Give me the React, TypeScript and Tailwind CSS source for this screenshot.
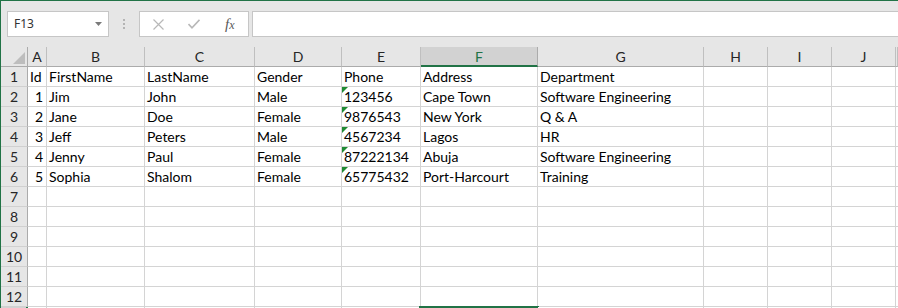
import React from "react";

const GRID =
  "grid grid-cols-[27px_19px_98px_110px_87px_79px_117px_166px_64px_64px_64px_1fr]";

const letters = ["A", "B", "C", "D", "E", "F", "G", "H", "I", "J", ""];

const data: string[][] = [
  ["Id", "FirstName", "LastName", "Gender", "Phone", "Address", "Department"],
  ["1", "Jim", "John", "Male", "123456", "Cape Town", "Software Engineering"],
  ["2", "Jane", "Doe", "Female", "9876543", "New York", "Q & A"],
  ["3", "Jeff", "Peters", "Male", "4567234", "Lagos", "HR"],
  ["4", "Jenny", "Paul", "Female", "87222134", "Abuja", "Software Engineering"],
  ["5", "Sophia", "Shalom", "Female", "65775432", "Port-Harcourt", "Training"],
];

function ErrorMark() {
  return (
    <svg
      className="absolute left-0 top-0"
      width="6"
      height="6"
      viewBox="0 0 6 6"
    >
      <polygon points="0,0 6,0 0,6" fill="#1f8a33" />
    </svg>
  );
}

function Row({ n }: { n: number }) {
  const row = data[n - 1];
  const selectedRow = n === 13;
  return (
    <div className={`${GRID} h-[20px]`}>
      <div
        className={
          selectedRow
            ? "h-[20px] bg-[#d2d2d2] border-r-2 border-b border-r-[#217346] border-b-[#d0d0d0]"
            : "h-[20px] bg-[#e6e6e6] border-r border-b border-r-[#ababab] border-b-[#d0d0d0] text-center leading-[19px] text-[#262626]"
        }
      >
        {selectedRow ? null : n}
      </div>
      {letters.map((l, ci) => {
        const val = row ? row[ci] : undefined;
        const isNum = n > 1 && ci === 0;
        const isPhone = n > 1 && ci === 4 && row;
        return (
          <div
            key={l + ci}
            className={`relative h-[20px] bg-white border-b border-r border-[#d4d4d4] pl-[2px] pr-[3px] leading-[19px] whitespace-nowrap text-black ${
              isNum ? "text-right" : "text-left"
            }`}
          >
            {isPhone ? <ErrorMark /> : null}
            {val ?? ""}
            {selectedRow && ci === 5 ? (
              <div className="absolute left-[-2px] top-[-1px] w-[120px] h-[22px] border-2 border-[#217346]" />
            ) : null}
          </div>
        );
      })}
    </div>
  );
}

export default function App() {
  const rows = Array.from({ length: 13 }, (_, i) => i + 1);
  return (
    <div className="w-[898px] h-[308px] overflow-hidden bg-[#e6e6e6] border-t border-l border-[#217346] font-['Lato',sans-serif] text-[14px]">
      {/* Formula bar */}
      <div className="flex items-start h-[46px] pt-[10px]">
        <div className="ml-[6px] w-[102px] h-[26px] bg-white border border-[#c6c6c6] flex items-center justify-between pl-[6px] pr-[6px]">
          <span className="font-['Noto_Sans',sans-serif] text-[12px] text-[#333]">
            F13
          </span>
          <svg width="7" height="4" viewBox="0 0 7 4">
            <polygon points="0,0 7,0 3.5,4" fill="#7a7a7a" />
          </svg>
        </div>
        <div className="ml-[14px] h-[26px] flex flex-col justify-center gap-[2px]">
          <div className="w-[2px] h-[2px] bg-[#b4b4b4]" />
          <div className="w-[2px] h-[2px] bg-[#b4b4b4]" />
          <div className="w-[2px] h-[2px] bg-[#b4b4b4]" />
        </div>
        <div className="ml-[14px] w-[110px] h-[26px] bg-white border border-[#c6c6c6] flex items-center">
          <svg className="ml-[13px]" width="11" height="11" viewBox="0 0 11 11">
            <path
              d="M0.5 0.5 L10.5 10.5 M10.5 0.5 L0.5 10.5"
              stroke="#b8b8b8"
              strokeWidth="1.2"
              fill="none"
            />
          </svg>
          <svg className="ml-[24px]" width="12" height="10" viewBox="0 0 12 10">
            <path
              d="M0.5 5 L4 8.8 L11.5 0.8"
              stroke="#b8b8b8"
              strokeWidth="1.6"
              fill="none"
            />
          </svg>
          <span className="ml-[25px] font-['Liberation_Serif',serif] italic text-[15px] leading-none text-[#595959]">
            f<span className="text-[12px]">x</span>
          </span>
        </div>
        <div className="ml-[3px] flex-1 h-[26px] bg-white border-y border-l border-[#c6c6c6]" />
      </div>

      {/* Column headers */}
      <div className={`${GRID} h-[20px]`}>
        <div className="h-[20px] border-r border-b border-r-[#ababab] border-b-[#ababab] flex items-end justify-end pr-[2px] pb-[2px]">
          <svg width="12" height="12" viewBox="0 0 12 12">
            <polygon points="12,0 12,12 0,12" fill="#bdbdbd" />
          </svg>
        </div>
        {letters.map((l, i) =>
          l === "F" ? (
            <div
              key={l + i}
              className="h-[20px] bg-[#d2d2d2] border-r border-r-[#ababab] border-b-2 border-b-[#217346] text-center leading-[19px] text-[#217346]"
            >
              {l}
            </div>
          ) : (
            <div
              key={l + i}
              className="h-[20px] border-r border-b border-r-[#bfbfbf] border-b-[#ababab] text-center leading-[19px] text-[#262626]"
            >
              {l}
            </div>
          )
        )}
      </div>

      {rows.map((n) => (
        <Row key={n} n={n} />
      ))}
    </div>
  );
}
